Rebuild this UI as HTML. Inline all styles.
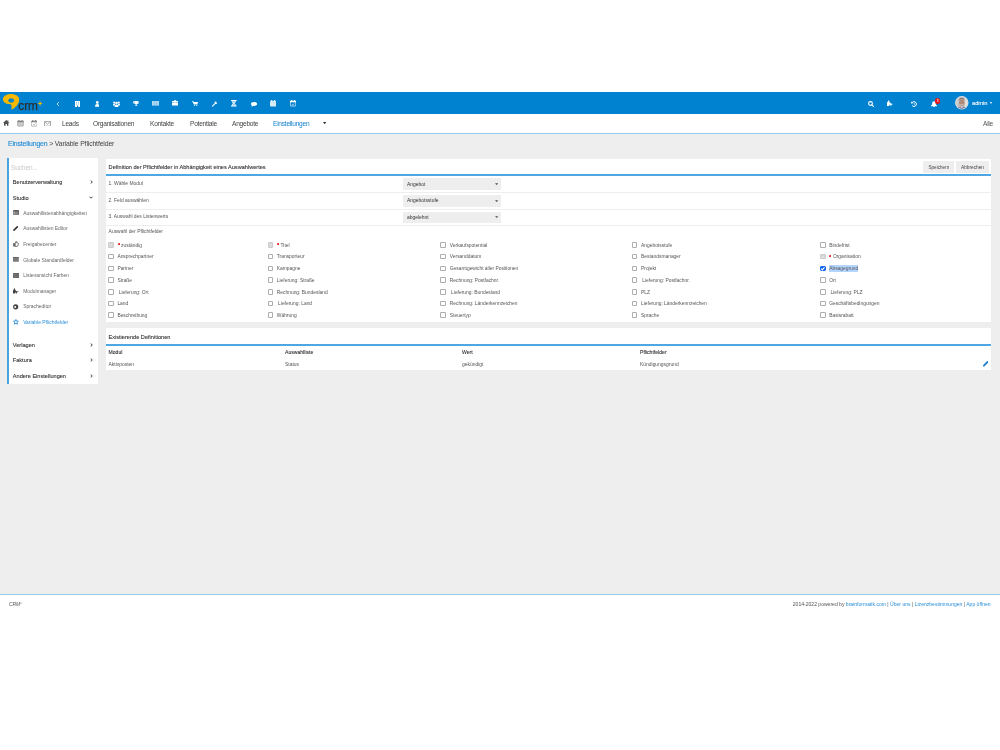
<!DOCTYPE html>
<html><head><meta charset="utf-8">
<style>
*{margin:0;padding:0;box-sizing:border-box}
html,body{width:1000px;height:750px;overflow:hidden;background:#fff;font-family:"Liberation Sans",sans-serif;color:#555}
.a{position:absolute;white-space:nowrap}
#topbar{position:absolute;left:0;top:92px;width:1000px;height:22px;background:#0082d0}
#nav{position:absolute;left:0;top:114px;width:1000px;height:20px;background:#fff;border-bottom:1px solid #98c8ea}
#main{position:absolute;left:0;top:134px;width:1000px;height:460px;background:#eeeeee}
#foot{position:absolute;left:0;top:594px;width:1000px;height:156px;background:#fff;border-top:1px solid #9ccbea}
.nt{font-size:6.6px;color:#444;top:120px;line-height:8px;letter-spacing:-0.25px}
.side{position:absolute;left:7px;top:158px;width:91px;height:226px;background:#fff;border-left:2px solid #4ba3e0}
.sh{font-size:5.6px;color:#333;line-height:6px;-webkit-text-stroke:0.1px #333}
.si{font-size:4.95px;color:#666;line-height:6px}
.panel{position:absolute;background:#fff}
.bt{font-size:4.95px;color:#555;line-height:6px}
.hd{font-size:5.6px;color:#333;line-height:6px;-webkit-text-stroke:0.1px #333}
.sel{position:absolute;left:403px;width:98px;height:11.5px;background:#eeeeee}
.cb{position:absolute;width:5.6px;height:5.6px;border:1px solid rgba(0,0,0,0.32);border-radius:1.2px;background:#fff}
.cb.dis{background:#d6d6d6;border-color:rgba(0,0,0,0.05)}.cb.chk{background:#0b62f2;border-color:#0b62f2}.cl{font-size:4.9px;color:#555;line-height:6px}
</style></head><body><div id="wrap" style="position:absolute;left:0;top:0;width:1000px;height:750px;overflow:hidden;filter:blur(0.3px)">
<div id="topbar"></div>
<div id="nav"></div>
<div id="main"></div>
<div id="foot"></div>


<!-- logo -->
<svg class="a" style="left:0px;top:92px" width="44" height="22" viewBox="0 0 44 22">
  <path d="M11 2 C6.2 2 2.9 4.3 2.9 7.2 C2.9 9.9 5.6 11.8 9.4 12.1 C10.6 12.2 11.4 12.6 11.5 14 L11.6 17.8 C14.6 16.2 19.2 12.6 19.2 7.6 C19.2 4.3 15.8 2 11 2 Z M11.2 6.2 C12.9 6.2 14.1 7.2 14.1 8.4 C14.1 9.6 12.9 10.6 11.2 10.6 C9.5 10.6 8.3 9.6 8.3 8.4 C8.3 7.2 9.5 6.2 11.2 6.2 Z" fill="#f4b800" fill-rule="evenodd"/>
  <text x="18.2" y="17.8" font-family="Liberation Sans" font-size="13.2" fill="#2e2e2e" textLength="19.8" lengthAdjust="spacingAndGlyphs" stroke="#2e2e2e" stroke-width="0.25">crm</text>
  <path d="M38.1 11.5 h4 M40.1 9.5 v4" stroke="#f4b800" stroke-width="1.1"/>
</svg>
<!-- top bar icons -->
<svg class="a" style="left:56px;top:101px" width="4" height="6" viewBox="0 0 4 6"><path d="M3 1 L1 3 L3 5" stroke="#cfe3f5" stroke-width="0.9" fill="none"/></svg>
<svg class="a" style="left:75px;top:100.5px" width="5" height="6.2" viewBox="0 0 5 6.2"><path d="M0 0 H5 V6.2 H3.1 V4.6 H1.9 V6.2 H0 Z" fill="#fff"/><path d="M1 1 h1 v0.8 h-1z M3 1 h1 v0.8 h-1z M1 2.6 h1 v0.8 h-1z M3 2.6 h1 v0.8 h-1z" fill="#0082d0" opacity="0.6"/></svg>
<svg class="a" style="left:94.8px;top:100.8px" width="4.6" height="5.8" viewBox="0 0 4.6 5.8"><circle cx="2.3" cy="1.5" r="1.4" fill="#fff"/><path d="M0 5.8 C0 3.6 1 3 2.3 3 C3.6 3 4.6 3.6 4.6 5.8 Z" fill="#fff"/></svg>
<svg class="a" style="left:113.4px;top:100.6px" width="7" height="6" viewBox="0 0 7 6"><circle cx="3.5" cy="2" r="1.3" fill="#fff"/><circle cx="1.2" cy="1.4" r="1" fill="#fff"/><circle cx="5.8" cy="1.4" r="1" fill="#fff"/><path d="M1.6 6 C1.6 4 2.4 3.4 3.5 3.4 C4.6 3.4 5.4 4 5.4 6 Z M0 4.4 C0 3 0.5 2.6 1.2 2.6 C1.8 2.6 2.2 3 2.2 4.4Z M4.8 4.4 C4.8 3 5.2 2.6 5.8 2.6 C6.5 2.6 7 3 7 4.4Z" fill="#fff"/></svg>
<svg class="a" style="left:133px;top:100.8px" width="6.4" height="5.4" viewBox="0 0 6.4 5.4"><path d="M1.4 0 H5 V1.8 C5 3 4.2 3.4 3.2 3.4 C2.2 3.4 1.4 3 1.4 1.8 Z M0 0.4 H1.6 V1.2 H0.8 C0.8 1.8 1.2 2 1.6 2.2 L1.4 2.8 C0.4 2.4 0 1.8 0 0.4Z M6.4 0.4 H4.8 V1.2 H5.6 C5.6 1.8 5.2 2 4.8 2.2 L5 2.8 C6 2.4 6.4 1.8 6.4 0.4Z M2.8 3.2 H3.6 V4.4 H4.4 V5.4 H2 V4.4 H2.8Z" fill="#fff"/></svg>
<svg class="a" style="left:152.2px;top:101.3px" width="7" height="4.6" viewBox="0 0 7 4.6"><rect x="0" y="0" width="7" height="4.6" fill="#fff" opacity="0.75"/><path d="M0.6 0.8 H6.4 M0.6 2.3 H6.4 M0.6 3.8 H6.4 M2.3 0.3 V4.3 M4.7 0.3 V4.3" stroke="#0082d0" stroke-width="0.35" opacity="0.5"/></svg>
<svg class="a" style="left:172.2px;top:100.4px" width="6.2" height="5.4" viewBox="0 0 6.2 5.4"><path d="M2 0.2 H4.2 V1 H6.2 V5.4 H0 V1 H2 Z" fill="#fff"/><rect x="0" y="2.4" width="6.2" height="0.6" fill="#0082d0" opacity="0.6"/><rect x="2.7" y="2.1" width="0.8" height="1.2" fill="#fff"/></svg>
<svg class="a" style="left:192.2px;top:100.8px" width="6" height="5.4" viewBox="0 0 6 5.4"><path d="M0 0 H1.2 L1.6 1 H6 L5.4 3.4 H2 Z" fill="#fff"/><circle cx="2.4" cy="4.7" r="0.6" fill="#fff"/><circle cx="4.8" cy="4.7" r="0.6" fill="#fff"/></svg>
<svg class="a" style="left:211.8px;top:101px" width="5.6" height="5.6" viewBox="0 0 5.6 5.6"><path d="M0.5 5.1 L3 2.6" stroke="#fff" stroke-width="1.1" stroke-linecap="round"/><path d="M2.6 2.2 C2.4 1 3.4 0 4.6 0.2 L3.8 1.2 L4.4 1.8 L5.4 1 C5.6 2.2 4.6 3.2 3.4 3 Z" fill="#fff"/></svg>
<svg class="a" style="left:231.4px;top:100.4px" width="5.6" height="6.4" viewBox="0 0 5.6 6.4"><path d="M0 0 H5.6 V0.9 H4.9 C4.9 2.2 3.8 2.8 3.3 3.2 C3.8 3.6 4.9 4.2 4.9 5.5 H5.6 V6.4 H0 V5.5 H0.7 C0.7 4.2 1.8 3.6 2.3 3.2 C1.8 2.8 0.7 2.2 0.7 0.9 H0 Z" fill="#fff"/><path d="M1.4 0.9 H4.2 C4.2 1.6 3.4 2.4 2.8 2.6 C2.2 2.4 1.4 1.6 1.4 0.9Z M1.4 5.5 C1.4 4.6 2.2 4 2.8 3.8 C3.4 4 4.2 4.6 4.2 5.5Z" fill="#0082d0" opacity="0.45"/></svg>
<svg class="a" style="left:250.6px;top:101.6px" width="6.2" height="5" viewBox="0 0 6.2 5"><ellipse cx="3.1" cy="2" rx="3.1" ry="2" fill="#fff"/><path d="M1 3 L0.6 5 L2.6 3.6Z" fill="#fff"/></svg>
<svg class="a" style="left:270px;top:100.4px" width="6.2" height="6.4" viewBox="0 0 6.2 6.4"><rect x="0" y="0.8" width="6.2" height="5.6" rx="0.8" fill="#fff" opacity="0.85"/><rect x="1.2" y="0" width="0.9" height="1.6" fill="#fff"/><rect x="4.1" y="0" width="0.9" height="1.6" fill="#fff"/><rect x="0" y="1.9" width="6.2" height="0.3" fill="#0082d0" opacity="0.4"/></svg>
<svg class="a" style="left:289.5px;top:100.4px" width="6.2" height="6.4" viewBox="0 0 6.2 6.4"><rect x="0.35" y="1.15" width="5.5" height="4.9" rx="0.7" fill="none" stroke="#fff" stroke-width="0.7"/><rect x="0" y="0.8" width="6.2" height="1.5" fill="#fff"/><rect x="1.2" y="0" width="0.9" height="1.6" fill="#fff"/><rect x="4.1" y="0" width="0.9" height="1.6" fill="#fff"/><path d="M2 4.2 L2.8 5 L4.4 3.4" stroke="#fff" stroke-width="0.6" fill="none"/></svg>
<!-- right icons -->
<svg class="a" style="left:867.8px;top:101px" width="6.2" height="6" viewBox="0 0 6.2 6"><circle cx="2.5" cy="2.5" r="1.9" stroke="#fff" stroke-width="1.1" fill="none"/><path d="M3.9 3.9 L5.7 5.6" stroke="#fff" stroke-width="1.1" stroke-linecap="round"/></svg>
<svg class="a" style="left:887.4px;top:100.2px" width="6" height="6" viewBox="0 0 6 6"><path d="M1.6 0 L2.4 1 V2 L4 3.4 L6 4 L4.2 5 V6 H3.4 V4.8 H2.2 V6 H0 V2.4 L1.2 1.2 Z" fill="#fff"/></svg>
<svg class="a" style="left:911.2px;top:100.6px" width="6" height="6" viewBox="0 0 6 6"><path d="M1.1 1.6 A2.4 2.4 0 1 1 1.2 4.6" stroke="#fff" stroke-width="1" fill="none"/><path d="M0 0.6 L0.3 2.7 L2.3 2.1 Z" fill="#fff"/><path d="M3.2 1.9 V3.2 L4.1 3.8" stroke="#fff" stroke-width="0.7" fill="none"/></svg>
<svg class="a" style="left:931px;top:100.6px" width="6" height="6" viewBox="0 0 6 6"><path d="M3 0.2 C4.4 0.2 4.8 1.4 4.8 2.6 C4.8 3.6 5.4 4.2 6 4.6 V5.2 H0 V4.6 C0.6 4.2 1.2 3.6 1.2 2.6 C1.2 1.4 1.6 0.2 3 0.2Z" fill="#fff"/><circle cx="3" cy="5.5" r="0.7" fill="#fff"/></svg>
<div class="a" style="left:934.6px;top:98.4px;width:5.2px;height:5.2px;border-radius:50%;background:#e8141c"></div>
<svg class="a" style="left:934.6px;top:98.4px" width="5.2" height="5.2" viewBox="0 0 5.2 5.2"><path d="M2.2 1.6 L2.9 1.2 V4" stroke="#fff" stroke-width="0.7" fill="none"/></svg>
<!-- avatar -->
<svg class="a" style="left:955.4px;top:96px" width="13.6" height="13.6" viewBox="0 0 13.6 13.6">
  <defs><clipPath id="av"><circle cx="6.8" cy="6.8" r="6.1"/></clipPath></defs>
  <circle cx="6.8" cy="6.8" r="6.7" fill="#e4e4e6"/>
  <g clip-path="url(#av)">
    <rect x="0" y="0" width="13.6" height="13.6" fill="#c4c2c2"/>
    <rect x="9.8" y="0" width="4" height="13.6" fill="#e2e0de"/>
    <rect x="0" y="0" width="2.6" height="13.6" fill="#d6d4d2"/>
    <ellipse cx="6.8" cy="6.6" rx="2.7" ry="3.4" fill="#b08a78"/>
    <path d="M4 4.6 C4.1 2.4 5.3 1.8 6.8 1.8 C8.3 1.8 9.5 2.4 9.6 4.6 C8.9 3.6 8 3.3 6.8 3.3 C5.6 3.3 4.7 3.6 4 4.6Z" fill="#8a7a70"/>
    <path d="M5.4 8.4 Q6.8 9.2 8.2 8.4" stroke="#fff" stroke-width="0.5" fill="none"/>
    <path d="M1.2 13.6 C1.6 11.4 3.6 10.6 6.8 10.6 C10 10.6 12 11.4 12.4 13.6Z" fill="#8a8aa8"/>
    <path d="M5.6 10.6 L6.8 12 L8 10.6Z" fill="#eee"/>
  </g>
</svg>
<div class="a" style="left:972px;top:99.6px;font-size:5.7px;line-height:7px;color:#f4f9fd;-webkit-text-stroke:0.12px #f4f9fd">admin</div>
<div class="a" style="left:989.8px;top:101.9px;border-left:1.6px solid transparent;border-right:1.6px solid transparent;border-top:2px solid #fff"></div>
<!-- nav row icons -->
<svg class="a" style="left:3.4px;top:120.2px" width="6.4" height="5.8" viewBox="0 0 6.4 5.8"><path d="M3.2 0 L6.4 2.9 H5.4 V5.8 H3.9 V4 H2.5 V5.8 H1 V2.9 H0 Z" fill="#505050"/><rect x="4.4" y="0.3" width="0.9" height="1.6" fill="#505050"/></svg>
<svg class="a" style="left:17.1px;top:120.2px" width="7" height="6.4" viewBox="0 0 7 6.4"><rect x="0.3" y="0.9" width="6.4" height="5.3" rx="0.8" fill="#c8c8c8" stroke="#9a9a9a" stroke-width="0.5"/><rect x="0.3" y="0.9" width="6.4" height="1.3" fill="#888"/><rect x="1.5" y="0" width="0.9" height="1.6" fill="#777"/><rect x="4.6" y="0" width="0.9" height="1.6" fill="#777"/></svg>
<svg class="a" style="left:30.8px;top:120.2px" width="6.4" height="6.4" viewBox="0 0 6.4 6.4"><rect x="0.3" y="1" width="5.8" height="5.1" rx="0.7" fill="none" stroke="#888" stroke-width="0.6"/><rect x="0.3" y="1" width="5.8" height="1.3" fill="#888"/><rect x="1.3" y="0" width="0.9" height="1.6" fill="#777"/><rect x="4.2" y="0" width="0.9" height="1.6" fill="#777"/><path d="M2.2 4.2 L3 4.9 L4.4 3.5" stroke="#888" stroke-width="0.55" fill="none"/></svg>
<svg class="a" style="left:44.2px;top:120.9px" width="7" height="5.6" viewBox="0 0 7 5.6"><rect x="0.4" y="0.4" width="6.2" height="4.8" rx="0.7" fill="none" stroke="#888" stroke-width="0.8"/><path d="M0.6 0.9 L3.5 3.1 L6.4 0.9" stroke="#888" stroke-width="0.7" fill="none"/></svg>
<svg class="a" style="left:322.6px;top:122px" width="3.4" height="2.4" viewBox="0 0 3.4 2.4"><path d="M0 0.1 H3.4 L1.7 2.3Z" fill="#333"/></svg>
<!-- nav text -->
<div class="a nt" style="left:62px">Leads</div>
<div class="a nt" style="left:93px">Organisationen</div>
<div class="a nt" style="left:150px">Kontakte</div>
<div class="a nt" style="left:190px">Potentiale</div>
<div class="a nt" style="left:232px">Angebote</div>
<div class="a nt" style="left:273px;color:#1280cc">Einstellungen</div>
<div class="a nt" style="left:983px;color:#555">Alle</div>

<!-- breadcrumb -->
<div class="a" style="left:8px;top:139.5px;font-size:6.9px;letter-spacing:-0.15px;color:#444;line-height:8px"><span style="color:#1f8ad6;-webkit-text-stroke:0.12px #1f8ad6">Einstellungen</span> &gt; Variable Pflichtfelder</div>

<!-- sidebar -->
<div class="side"></div>
<div class="a" style="left:11px;top:163.6px;font-size:6.5px;letter-spacing:-0.1px;color:#c8c8c8;line-height:7px">Suchen...</div>
<div class="a sh" style="left:12.8px;top:179px">Benutzerverwaltung</div>
<div class="a sh" style="left:12.8px;top:194.6px">Studio</div>
<div class="a si" style="left:23.2px;top:210.8px">Auswahllistenabhängigkeiten</div>
<div class="a si" style="left:23.2px;top:226.4px">Auswahllisten Editor</div>
<div class="a si" style="left:23.2px;top:242.2px">Freigabecenter</div>
<div class="a si" style="left:23.2px;top:257.7px">Globale Standardfelder</div>
<div class="a si" style="left:23.2px;top:273.4px">Listenansicht Farben</div>
<div class="a si" style="left:23.2px;top:288.9px">Modulmanager</div>
<div class="a si" style="left:23.2px;top:304.3px">Spracheditor</div>
<div class="a si" style="left:23.2px;top:320.4px;color:#2a90d8">Variable Pflichtfelder</div>
<div class="a sh" style="left:12.8px;top:341.6px">Verlagen</div>
<div class="a sh" style="left:12.8px;top:357.2px">Faktura</div>
<div class="a sh" style="left:12.8px;top:372.8px">Andere Einstellungen</div>


<!-- sidebar icons -->
<svg class="a" style="left:89.6px;top:179.9px" width="3" height="4" viewBox="0 0 3 4"><path d="M0.7 0.5 L2.3 2 L0.7 3.5" stroke="#444" stroke-width="1" fill="none"/></svg>
<svg class="a" style="left:89px;top:195.6px" width="4" height="3" viewBox="0 0 4 3"><path d="M0.5 0.7 L2 2.2 L3.5 0.7" stroke="#444" stroke-width="1" fill="none"/></svg>
<svg class="a" style="left:89.6px;top:342.5px" width="3" height="4" viewBox="0 0 3 4"><path d="M0.7 0.5 L2.3 2 L0.7 3.5" stroke="#444" stroke-width="1" fill="none"/></svg>
<svg class="a" style="left:89.6px;top:358.1px" width="3" height="4" viewBox="0 0 3 4"><path d="M0.7 0.5 L2.3 2 L0.7 3.5" stroke="#444" stroke-width="1" fill="none"/></svg>
<svg class="a" style="left:89.6px;top:373.7px" width="3" height="4" viewBox="0 0 3 4"><path d="M0.7 0.5 L2.3 2 L0.7 3.5" stroke="#444" stroke-width="1" fill="none"/></svg>
<svg class="a" style="left:13px;top:210.2px" width="6" height="4.8" viewBox="0 0 6 4.8"><rect x="0" y="0" width="6" height="4.8" rx="0.5" fill="#555"/><rect x="0.5" y="1.5" width="5" height="2.8" fill="#8a8a8a"/><rect x="0.5" y="1.5" width="1.3" height="2.8" fill="#bbb"/><path d="M0.5 2.9 H5.5" stroke="#666" stroke-width="0.3"/></svg>
<svg class="a" style="left:13.3px;top:225.9px" width="5.2" height="5.2" viewBox="0 0 5.2 5.2"><path d="M1 4.2 L4.3 0.9" stroke="#3a3a3a" stroke-width="1.7" stroke-linecap="round"/></svg>
<svg class="a" style="left:13.2px;top:241.1px" width="5.8" height="5.8" viewBox="0 0 5.8 5.8"><path d="M2.2 2 L3 0.3 C3.6 0.3 3.8 0.8 3.6 1.8 L4.8 1.9 C5.4 2 5.5 2.6 5.3 3.2 L4.9 4.8 C4.8 5.2 4.5 5.4 4.1 5.4 H2.2 Z" fill="none" stroke="#555" stroke-width="0.8" stroke-linejoin="round"/><rect x="0.3" y="2.2" width="1.5" height="3.3" fill="#444"/></svg>
<svg class="a" style="left:13.2px;top:257.2px" width="5.8" height="4.8" viewBox="0 0 5.8 4.8"><rect x="0" y="0" width="5.8" height="4.8" rx="0.6" fill="#7a7a7a"/><rect x="0" y="0" width="5.8" height="1" rx="0.4" fill="#666"/></svg>
<svg class="a" style="left:13px;top:273px" width="6" height="5" viewBox="0 0 6 5"><rect x="0" y="0" width="6" height="5" fill="#666"/><path d="M0 1.7 H6 M0 3.3 H6 M2 0 V5" stroke="#888" stroke-width="0.35"/></svg>
<svg class="a" style="left:13px;top:288px" width="6" height="5.6" viewBox="0 0 6 5.6"><path d="M1.4 0 L2.2 1 V2 L3.6 3.2 L6 3.6 L4 4.4 V5.6 H3.2 V4.4 H2.2 V5.6 H0 V2.2 L1 1.2 Z" fill="#444"/></svg>
<svg class="a" style="left:13.3px;top:304px" width="5.4" height="5.6" viewBox="0 0 5.4 5.6"><circle cx="2.7" cy="2.8" r="2.6" fill="#444"/><circle cx="2.2" cy="2.9" r="1" fill="#fff"/></svg>
<svg class="a" style="left:13.1px;top:319.2px" width="5.8" height="6" viewBox="0 0 5.8 6"><path d="M2.9 0.5 L3.6 2.1 L5.3 2.2 L4 3.4 L4.5 5.2 L2.9 4.3 L1.3 5.2 L1.8 3.4 L0.5 2.2 L2.2 2.1 Z" stroke="#2a8fd8" stroke-width="0.9" fill="none" stroke-linejoin="round"/></svg>
<!-- panel 1 -->
<div class="panel" style="left:105.5px;top:158.5px;width:885.6px;height:163px"></div>


<!-- panel 1 contents -->
<div class="a hd" style="left:108.6px;top:164.2px">Definition der Pflichtfelder in Abhängigkeit eines Auswahlwertes</div>
<div class="a" style="left:923px;top:161px;width:31px;height:11.5px;background:#eeeeee"></div>
<div class="a" style="left:956px;top:161px;width:33px;height:11.5px;background:#eeeeee"></div>
<div class="a bt" style="left:928.5px;top:164.5px;font-size:4.6px;color:#444">Speichern</div>
<div class="a bt" style="left:961px;top:164.5px;font-size:4.75px;color:#444">Abbrechen</div>
<div class="a" style="left:105.5px;top:174.4px;width:885.8px;height:1.6px;background:#4ea6e2"></div>
<div class="a bt" style="left:108.6px;top:180.8px">1. Wähle Modul</div>
<div class="a" style="left:105.5px;top:192.2px;width:885.6px;height:0.8px;background:#eeeeee"></div>
<div class="a bt" style="left:108.6px;top:197.5px">2. Feld auswählen</div>
<div class="a" style="left:105.5px;top:208.9px;width:885.6px;height:0.8px;background:#eeeeee"></div>
<div class="a bt" style="left:108.6px;top:214.4px">3. Auswahl des Listenwerts</div>
<div class="a" style="left:105.5px;top:225.3px;width:885.6px;height:0.8px;background:#eeeeee"></div>
<div class="sel" style="top:178.2px"></div>
<div class="sel" style="top:195px"></div>
<div class="sel" style="top:211.8px"></div>
<div class="a bt" style="left:407px;top:181.6px;color:#333">Angebot</div>
<div class="a bt" style="left:407px;top:198.4px;color:#333">Angebotsstufe</div>
<div class="a bt" style="left:407px;top:215.2px;color:#333">abgelehnt</div>
<svg class="a" style="left:495.2px;top:182.8px" width="3.2" height="2.2" viewBox="0 0 3.2 2.2"><path d="M0 0.2 H3.2 L1.6 2.1Z" fill="#555"/></svg>
<svg class="a" style="left:495.2px;top:199.6px" width="3.2" height="2.2" viewBox="0 0 3.2 2.2"><path d="M0 0.2 H3.2 L1.6 2.1Z" fill="#555"/></svg>
<svg class="a" style="left:495.2px;top:216.4px" width="3.2" height="2.2" viewBox="0 0 3.2 2.2"><path d="M0 0.2 H3.2 L1.6 2.1Z" fill="#555"/></svg>
<div class="a bt" style="left:108.6px;top:229px">Auswahl der Pflichtfelder</div>
<!-- checkbox grid -->
<div class="cb dis" style="left:108.2px;top:242.05px"></div>
<svg class="a" style="left:108.2px;top:242.05px" width="5.6" height="5.6" viewBox="0 0 5.6 5.6"><path d="M1.4 2.9 L2.4 3.8 L4.3 1.7" stroke="#f2f2f2" stroke-width="0.7" fill="none"/></svg>
<svg class="a" style="left:117.6px;top:243.0px" width="2.2" height="2.2" viewBox="0 0 2.2 2.2"><circle cx="1.1" cy="1.1" r="1.05" fill="#e3141c"/></svg>
<div class="a cl" style="left:121.1px;top:242.6px">zuständig</div>
<div class="cb" style="left:108.2px;top:253.85px"></div>
<div class="a cl" style="left:117.4px;top:254.4px">Ansprechpartner</div>
<div class="cb" style="left:108.2px;top:265.65px"></div>
<div class="a cl" style="left:117.4px;top:266.2px">Partner</div>
<div class="cb" style="left:108.2px;top:277.35px"></div>
<div class="a cl" style="left:117.4px;top:277.9px">Straße</div>
<div class="cb" style="left:108.2px;top:289.05px"></div>
<div class="a cl" style="left:118.7px;top:289.6px">Lieferung: Ort</div>
<div class="cb" style="left:108.2px;top:300.65px"></div>
<div class="a cl" style="left:117.4px;top:301.2px">Land</div>
<div class="cb" style="left:108.2px;top:312.45px"></div>
<div class="a cl" style="left:117.4px;top:313.0px">Beschreibung</div>
<div class="cb dis" style="left:267.8px;top:242.05px"></div>
<svg class="a" style="left:267.8px;top:242.05px" width="5.6" height="5.6" viewBox="0 0 5.6 5.6"><path d="M1.4 2.9 L2.4 3.8 L4.3 1.7" stroke="#f2f2f2" stroke-width="0.7" fill="none"/></svg>
<svg class="a" style="left:277.0px;top:243.0px" width="2.2" height="2.2" viewBox="0 0 2.2 2.2"><circle cx="1.1" cy="1.1" r="1.05" fill="#e3141c"/></svg>
<div class="a cl" style="left:280.5px;top:242.6px">Titel</div>
<div class="cb" style="left:267.8px;top:253.85px"></div>
<div class="a cl" style="left:276.8px;top:254.4px">Transporteur</div>
<div class="cb" style="left:267.8px;top:265.65px"></div>
<div class="a cl" style="left:276.8px;top:266.2px">Kampagne</div>
<div class="cb" style="left:267.8px;top:277.35px"></div>
<div class="a cl" style="left:276.8px;top:277.9px">Lieferung: Straße</div>
<div class="cb" style="left:267.8px;top:289.05px"></div>
<div class="a cl" style="left:276.8px;top:289.6px">Rechnung: Bundesland</div>
<div class="cb" style="left:267.8px;top:300.65px"></div>
<div class="a cl" style="left:278.1px;top:301.2px">Lieferung: Land</div>
<div class="cb" style="left:267.8px;top:312.45px"></div>
<div class="a cl" style="left:276.8px;top:313.0px">Währung</div>
<div class="cb" style="left:440.2px;top:242.05px"></div>
<div class="a cl" style="left:449.8px;top:242.6px">Verkaufspotential</div>
<div class="cb" style="left:440.2px;top:253.85px"></div>
<div class="a cl" style="left:449.8px;top:254.4px">Versanddatum</div>
<div class="cb" style="left:440.2px;top:265.65px"></div>
<div class="a cl" style="left:449.8px;top:266.2px">Gesamtgewicht aller Positionen</div>
<div class="cb" style="left:440.2px;top:277.35px"></div>
<div class="a cl" style="left:449.8px;top:277.9px">Rechnung: Postfachnr.</div>
<div class="cb" style="left:440.2px;top:289.05px"></div>
<div class="a cl" style="left:451.1px;top:289.6px">Lieferung: Bundesland</div>
<div class="cb" style="left:440.2px;top:300.65px"></div>
<div class="a cl" style="left:449.8px;top:301.2px">Rechnung: Länderkennzeichen</div>
<div class="cb" style="left:440.2px;top:312.45px"></div>
<div class="a cl" style="left:449.8px;top:313.0px">Steuertyp</div>
<div class="cb" style="left:631.6px;top:242.05px"></div>
<div class="a cl" style="left:641.0px;top:242.6px">Angebotsstufe</div>
<div class="cb" style="left:631.6px;top:253.85px"></div>
<div class="a cl" style="left:641.0px;top:254.4px">Bestandsmanager</div>
<div class="cb" style="left:631.6px;top:265.65px"></div>
<div class="a cl" style="left:641.0px;top:266.2px">Projekt</div>
<div class="cb" style="left:631.6px;top:277.35px"></div>
<div class="a cl" style="left:642.3px;top:277.9px">Lieferung: Postfachnr.</div>
<div class="cb" style="left:631.6px;top:289.05px"></div>
<div class="a cl" style="left:641.0px;top:289.6px">PLZ</div>
<div class="cb" style="left:631.6px;top:300.65px"></div>
<div class="a cl" style="left:641.0px;top:301.2px">Lieferung: Länderkennzeichen</div>
<div class="cb" style="left:631.6px;top:312.45px"></div>
<div class="a cl" style="left:641.0px;top:313.0px">Sprache</div>
<div class="cb" style="left:820.2px;top:242.05px"></div>
<div class="a cl" style="left:829.2px;top:242.6px">Bindefrist</div>
<div class="cb dis" style="left:820.2px;top:253.85px"></div>
<svg class="a" style="left:820.2px;top:253.85px" width="5.6" height="5.6" viewBox="0 0 5.6 5.6"><path d="M1.4 2.9 L2.4 3.8 L4.3 1.7" stroke="#f2f2f2" stroke-width="0.7" fill="none"/></svg>
<svg class="a" style="left:829.4px;top:254.8px" width="2.2" height="2.2" viewBox="0 0 2.2 2.2"><circle cx="1.1" cy="1.1" r="1.05" fill="#e3141c"/></svg>
<div class="a cl" style="left:832.9px;top:254.4px">Organisation</div>
<div class="cb chk" style="left:820.2px;top:265.65px"></div>
<svg class="a" style="left:820.2px;top:265.65px" width="5.6" height="5.6" viewBox="0 0 5.6 5.6"><path d="M1.2 2.7 L2.3 3.9 L4.5 1.3" stroke="#fff" stroke-width="1.15" fill="none"/></svg>
<div class="a" style="left:829.2px;top:264.8px;width:29px;height:7.6px;background:#b4d5fe"></div>
<div class="a cl" style="left:829.2px;top:266.2px">Absagegrund</div>
<div class="cb" style="left:820.2px;top:277.35px"></div>
<div class="a cl" style="left:829.2px;top:277.9px">Ort</div>
<div class="cb" style="left:820.2px;top:289.05px"></div>
<div class="a cl" style="left:830.5px;top:289.6px">Lieferung: PLZ</div>
<div class="cb" style="left:820.2px;top:300.65px"></div>
<div class="a cl" style="left:829.2px;top:301.2px">Geschäftsbedingungen</div>
<div class="cb" style="left:820.2px;top:312.45px"></div>
<div class="a cl" style="left:829.2px;top:313.0px">Basisrabatt</div>
<!-- panel 2 -->
<div class="panel" style="left:105.5px;top:328px;width:885.6px;height:42px"></div>


<!-- panel 2 contents -->
<div class="a hd" style="left:108.5px;top:333.8px">Existierende Definitionen</div>
<div class="a" style="left:105.5px;top:344.1px;width:885.8px;height:1.6px;background:#4ea6e2"></div>
<div class="a hd" style="left:108.5px;top:348.5px;font-size:5.1px">Modul</div>
<div class="a hd" style="left:285px;top:348.5px;font-size:5.1px">Auswahlliste</div>
<div class="a hd" style="left:462px;top:348.5px;font-size:5.1px">Wert</div>
<div class="a hd" style="left:640px;top:348.5px;font-size:5.1px">Pflichtfelder</div>
<div class="a bt" style="left:108.5px;top:362.2px">Aktivposten</div>
<div class="a bt" style="left:285px;top:362.2px">Status</div>
<div class="a bt" style="left:462px;top:362.2px">gekündigt</div>
<div class="a bt" style="left:640px;top:362.2px">Kündigungsgrund</div>
<!-- footer -->
<div class="a" style="left:9px;top:599.9px;font-size:5px;letter-spacing:-0.1px;font-style:italic;color:#555;line-height:6px">CRM<span style="font-size:3.2px;vertical-align:1.6px">+</span></div>

<div class="a" style="left:792.8px;top:601.3px;font-size:5.05px;line-height:6px;color:#555">2014-2022 powered by <span style="color:#2a90d8">brainformatik.com</span> | <span style="color:#2a90d8">Über uns</span> | <span style="color:#2a90d8">Lizenzbestimmungen</span> | <span style="color:#2a90d8">App öffnen</span></div>
<!-- edit pencil -->
<svg class="a" style="left:982.8px;top:361px" width="5.4" height="5.6" viewBox="0 0 5.4 5.6"><path d="M0.9 4.7 L4.5 1" stroke="#1a7fd0" stroke-width="1.8" stroke-linecap="round"/></svg>
</div></body></html>
